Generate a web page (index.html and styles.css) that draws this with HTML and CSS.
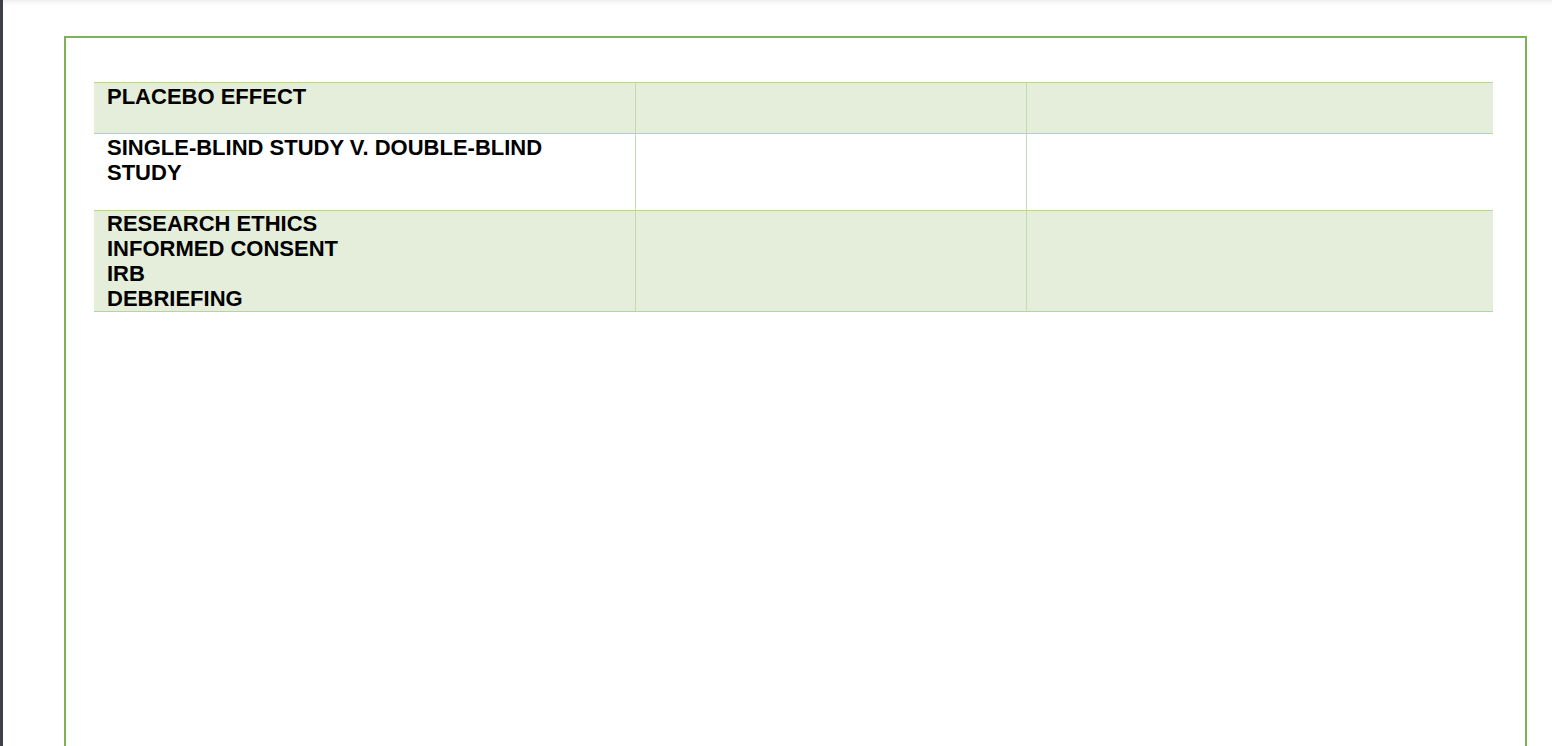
FILE: index.html
```html
<!DOCTYPE html>
<html>
<head>
<meta charset="utf-8">
<link rel="stylesheet" href="styles.css">
</head>
<body>
<div class="viewer">
  <div class="strip"></div>
  <div class="canvas">
    <div class="page">
      <table class="grid">
        <colgroup>
          <col class="c1"><col class="c2"><col class="c3">
        </colgroup>
        <tr class="shade r1">
          <td>PLACEBO EFFECT</td><td></td><td></td>
        </tr>
        <tr class="r2">
          <td>SINGLE-BLIND STUDY V. DOUBLE-BLIND<br>STUDY</td><td></td><td></td>
        </tr>
        <tr class="shade r3">
          <td>RESEARCH ETHICS<br>INFORMED CONSENT<br>IRB<br>DEBRIEFING</td><td></td><td></td>
        </tr>
      </table>
    </div>
  </div>
</div>
</body>
</html>
```
FILE: styles.css
```css
html, body {
  margin: 0;
  padding: 0;
  height: 100%;
  overflow: hidden;
  background: #ffffff;
}
.viewer {
  display: flex;
  height: 746px;
}
.strip {
  width: 3px;
  flex: none;
  background: #3d4044;
}
.canvas {
  flex: 1;
  padding: 36px 0 0 61px;
  background: linear-gradient(to bottom, #ececec 0px, #f7f7f7 2px, #ffffff 6px);
}
.page {
  width: 1463px;
  height: 800px;
  border: 2px solid #7db353;
  padding: 44px 0 0 28px;
  box-sizing: border-box;
  background: #ffffff;
}
.grid {
  border-collapse: collapse;
  width: 1399px;
  table-layout: fixed;
  font-family: "Liberation Sans", Arial, sans-serif;
  font-weight: bold;
  font-size: 22px;
  line-height: 25px;
  color: #000000;
}
.c1 { width: 541px; }
.c2 { width: 391px; }
.c3 { width: 467px; }
.grid td {
  border-top: 1px solid #b4d69c;
  border-bottom: 1px solid #b4d69c;
  border-left: 1px solid #c3dcae;
  padding: 1px 0 0 13px;
  vertical-align: top;
}
.grid td:first-child { border-left: none; }
.shade td { background: #e4eedb; }
.r1 td { height: 49px; }
.r2 td { height: 75px; }
.r3 td { height: 99px; padding-top: 0; }
```
